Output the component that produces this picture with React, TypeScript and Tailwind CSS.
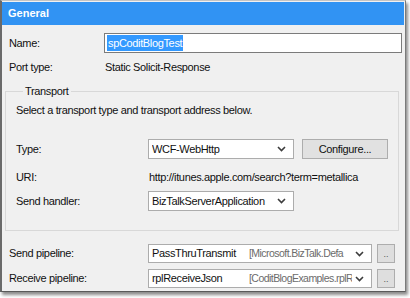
const font = { fontFamily: '"Liberation Sans", Arial, sans-serif' };

function Chevron() {
  return (
    <svg width="9" height="6" viewBox="0 0 9 6" className="shrink-0">
      <path d="M1 1 L4.5 4.5 L8 1" fill="none" stroke="#3c3c3c" strokeWidth="1.6" />
    </svg>
  );
}

function Combo({ width, value, extra }: { width: string; value: string; extra?: string }) {
  return (
    <div className={`${width} h-full flex items-center bg-white border border-[#acacac] pl-[3px] pr-[7px]`}>
      <div className="flex-1 flex items-center overflow-hidden whitespace-nowrap mr-[3px]">
        <span className="w-[97px] shrink-0">{value}</span>
        {extra && <span className="text-[#6b6b6b] text-[10.5px] tracking-[-0.55px]">{extra}</span>}
      </div>
      <Chevron />
    </div>
  );
}

function DotsButton() {
  return (
    <div className="ml-[5px] w-[18px] h-full bg-[#dedede] border border-[#adadad] flex items-end justify-center pb-[3px] text-[9px] leading-[9px] tracking-normal text-[#555]">
      ..
    </div>
  );
}

export default function App() {
  return (
    <div className="w-[410px] h-[298px] bg-white overflow-hidden" style={font}>
      <div className="w-[406px] h-[292px] bg-[#f0f0f0] border-l-2 border-l-[#6a6a6a] border-t border-t-[#c4c4c4] border-r border-r-[#7a7a7a] border-b border-b-[#5a5a5a] shadow-[2px_3px_3px_rgba(0,0,0,0.45)] text-[11px] tracking-[-0.35px] text-[#111]">
        {/* header */}
        <div className="mt-[1px] mr-[1px] h-[23px] bg-[#3193f3] flex items-center pl-[6px] text-white font-bold tracking-normal">
          General
        </div>

        {/* name */}
        <div className="mt-[8px] h-[20px] flex items-center pl-[7px]">
          <span className="w-[95px]">Name:</span>
          <div className="w-[298px] h-full bg-white border border-[#7b7b7b] flex items-center pl-[2px]">
            <span className="bg-[#3399ff] text-white px-[1px]">spCoditBlogTest</span>
          </div>
        </div>

        {/* port type */}
        <div className="mt-[5px] h-[19px] flex items-center pl-[7px]">
          <span className="w-[96px]">Port type:</span>
          <span>Static Solicit-Response</span>
        </div>

        {/* transport group */}
        <fieldset className="mt-[7px] ml-[3px] w-[394px] h-[147px] border border-[#d8d8d8] pl-[10px]">
          <legend className="ml-[7px] px-[2px] leading-[14px]">Transport</legend>
          <div className="mt-[5px] h-[14px] flex items-center">
            Select a transport type and transport address below.
          </div>
          <div className="mt-[22px] h-[20px] flex items-center">
            <span className="w-[132px]">Type:</span>
            <Combo width="w-[146px]" value="WCF-WebHttp" />
            <div className="ml-[8px] w-[86px] h-full bg-[#e1e1e1] border border-[#adadad] flex items-center justify-center">
              Configure...
            </div>
          </div>
          <div className="mt-[9px] h-[18px] flex items-center">
            <span className="w-[133px]">URI:</span>
            <span>http://itunes.apple.com/search?term=metallica</span>
          </div>
          <div className="mt-[5px] h-[20px] flex items-center">
            <span className="w-[132px]">Send handler:</span>
            <Combo width="w-[146px]" value="BizTalkServerApplication" />
          </div>
        </fieldset>

        {/* pipelines */}
        <div className="mt-[13px] h-[19px] flex items-center pl-[7px]">
          <span className="w-[139px]">Send pipeline:</span>
          <Combo width="w-[224px]" value="PassThruTransmit" extra="[Microsoft.BizTalk.Defa" />
          <DotsButton />
        </div>
        <div className="mt-[6px] h-[19px] flex items-center pl-[7px]">
          <span className="w-[139px]">Receive pipeline:</span>
          <Combo width="w-[224px]" value="rplReceiveJson" extra="[CoditBlogExamples.rplRe" />
          <DotsButton />
        </div>
      </div>
    </div>
  );
}
